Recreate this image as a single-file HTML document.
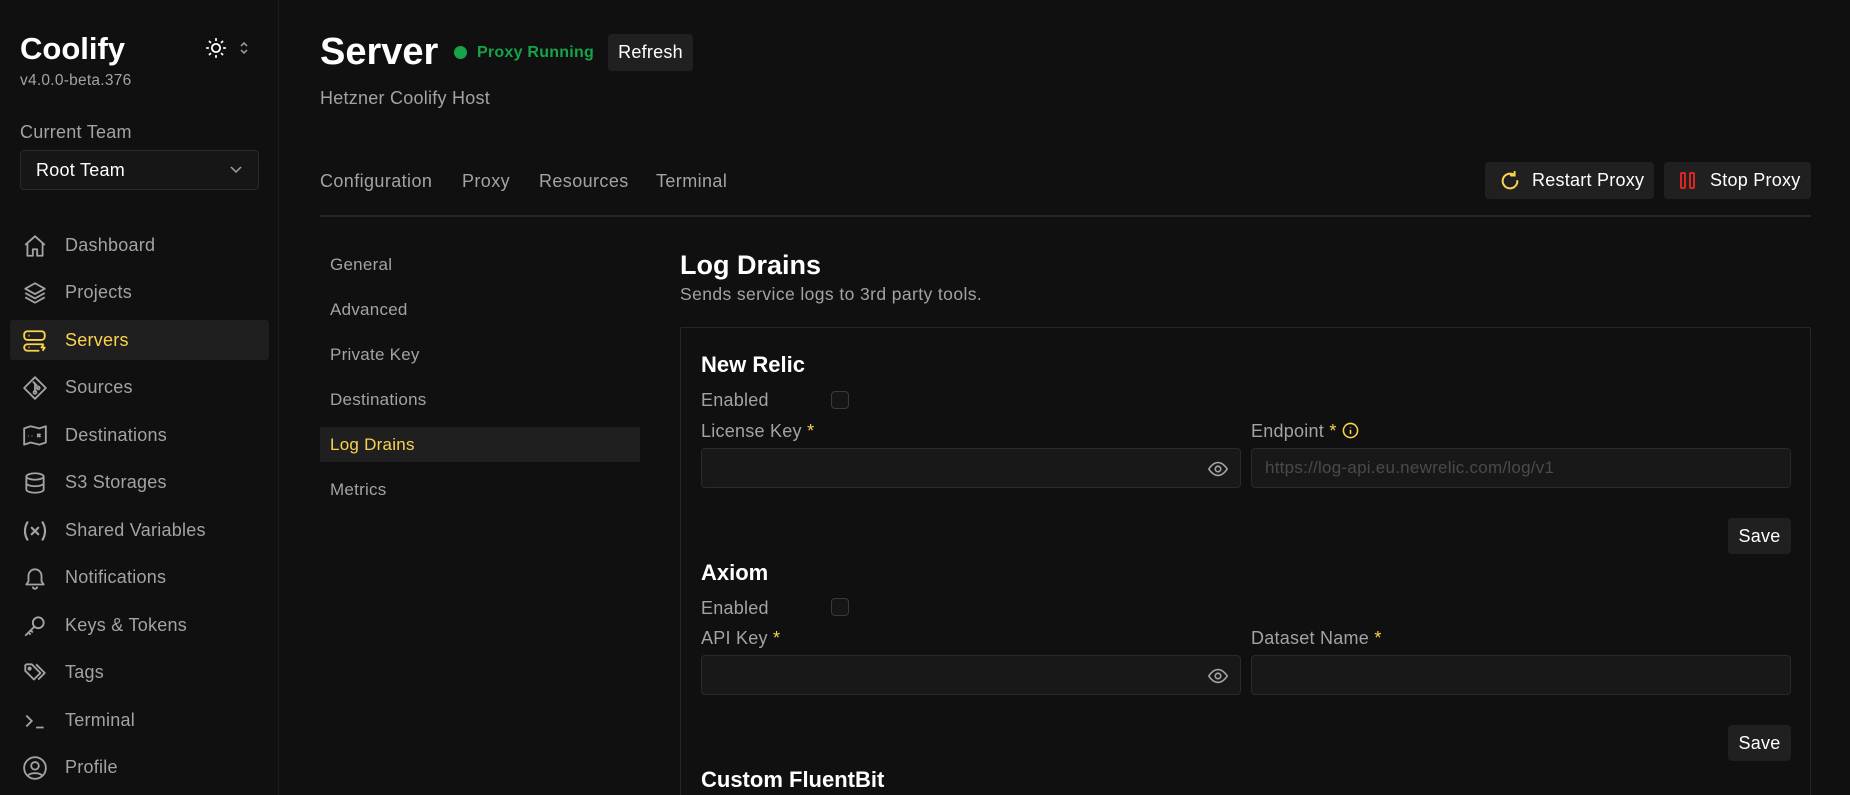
<!DOCTYPE html>
<html style="overflow:hidden;width:1850px;height:795px"><head><meta charset="utf-8"><style>
*{margin:0;padding:0;box-sizing:border-box}
body{width:1850px;height:795px;background:#101010;font-family:"Liberation Sans",sans-serif;color:#a3a3a3;position:relative;overflow:hidden;letter-spacing:0.25px}
.a{position:absolute;white-space:nowrap}
.side{position:absolute;left:0;top:0;width:279px;height:795px;border-right:1px solid #1c1c1c}
.nav{position:absolute;left:10px;width:259px;height:40px;line-height:40px;font-size:18px;color:#a3a3a3;padding-left:55px;border-radius:3px}
.nav svg{position:absolute;left:12px;top:8px}
.btn{position:absolute;background:#202020;border-radius:4px;color:#fff;font-size:18px;text-align:center}
.inp{position:absolute;background:#181818;border:1px solid #2a2a2a;border-radius:4px;height:40px}
.lbl{position:absolute;font-size:18px;color:#a3a3a3;line-height:22px}
.req{color:#fcd34d}
.cb{position:absolute;width:18px;height:18px;border:1px solid #3a3a3a;border-radius:4px;background:#161616}
.h3{position:absolute;font-size:22px;font-weight:bold;color:#fff;line-height:26px;letter-spacing:0}
.sub{position:absolute;left:330px;font-size:17px;color:#a3a3a3;line-height:22px}
</style></head><body>
<div class="side">
<div class="a" style="left:20px;top:31px;font-size:31px;font-weight:bold;color:#fff;line-height:36px;letter-spacing:0">Coolify</div>
<div class="a" style="left:20px;top:71px;font-size:15.5px;color:#a3a3a3;line-height:20px">v4.0.0-beta.376</div>
<svg class="a" style="left:205px;top:37px" width="22" height="22" viewBox="0 0 24 24" fill="none" stroke="#fff" stroke-width="2" stroke-linecap="round"><circle cx="12" cy="12" r="4.5"/><path d="M12 2v1.5M12 20.5V22M2 12h1.5M20.5 12H22M4.9 4.9l1 1M18.1 18.1l1 1M4.9 19.1l1-1M18.1 5.9l1-1"/></svg>
<svg class="a" style="left:238px;top:40px" width="12" height="16" viewBox="0 0 12 16" fill="none" stroke="#a3a3a3" stroke-width="1.5"><path d="M3 6l3-3 3 3M3 10l3 3 3-3"/></svg>
<div class="a" style="left:20px;top:121px;font-size:18px;line-height:22px">Current Team</div>
<div class="a" style="left:20px;top:150px;width:239px;height:40px;border:1px solid #2a2a2a;border-radius:4px;background:#161616;color:#fff;font-size:18px;line-height:38px;padding-left:15px">Root Team
<svg style="position:absolute;right:14px;top:12px" width="16" height="14" viewBox="0 0 16 14" fill="none" stroke="#a3a3a3" stroke-width="1.5"><path d="M3 4l5 5 5-5"/></svg></div>

<div class="nav" style="top:225px"><svg width="26" height="26" viewBox="0 0 24 24" fill="none" stroke="#a3a3a3" stroke-width="1.7" stroke-linejoin="round"><path d="M3 11l9-8 9 8M5 9.5V21h5v-6h4v6h5V9.5"/></svg>Dashboard</div>
<div class="nav" style="top:272px"><svg width="26" height="26" viewBox="0 0 24 24" fill="none" stroke="#a3a3a3" stroke-width="1.7" stroke-linejoin="round"><path d="M12 3l9 5-9 5-9-5zM3 12l9 5 9-5M3 16l9 5 9-5"/></svg>Projects</div>
<div class="nav" style="top:320px;background:#1f1f1f;color:#fcd34d"><svg width="26" height="26" viewBox="0 0 24 24" fill="none" stroke="#fcd34d" stroke-width="1.7" stroke-linejoin="round"><rect x="2" y="3" width="19" height="8" rx="3"/><path d="M16 21H5a3 3 0 0 1 0-6h15M6 7h1M6 18h1M20 15l-2 3h3l-2 3"/></svg>Servers</div>
<div class="nav" style="top:367px"><svg width="26" height="26" viewBox="0 0 24 24" fill="none" stroke="#a3a3a3" stroke-width="1.7" stroke-linejoin="round"><path d="M12 2l10 10-10 10L2 12z"/><circle cx="12" cy="16" r="1.3"/><circle cx="15" cy="12" r="1.3"/><path d="M12 8v7M10 6l2 2 2 2"/></svg>Sources</div>
<div class="nav" style="top:415px"><svg width="26" height="26" viewBox="0 0 24 24" fill="none" stroke="#a3a3a3" stroke-width="1.7" stroke-linejoin="round"><path d="M2 5l6-2 8 2 6-2v15l-6 2-8-2-6 2z"/><path d="M6 12h.5M9 12h.5M14 10l3 3M17 10l-3 3"/></svg>Destinations</div>
<div class="nav" style="top:462px"><svg width="26" height="26" viewBox="0 0 24 24" fill="none" stroke="#a3a3a3" stroke-width="1.7"><ellipse cx="12" cy="6" rx="8" ry="3"/><path d="M4 6v12c0 1.7 3.6 3 8 3s8-1.3 8-3V6M4 12c0 1.7 3.6 3 8 3s8-1.3 8-3"/></svg>S3 Storages</div>
<div class="nav" style="top:510px"><svg width="26" height="26" viewBox="0 0 24 24" fill="none" stroke="#a3a3a3" stroke-width="2" stroke-linecap="round"><path d="M5 4c-3 5-3 11 0 16M19 4c3 5 3 11 0 16M9 9l6 6M15 9l-6 6"/></svg>Shared Variables</div>
<div class="nav" style="top:557px"><svg width="26" height="26" viewBox="0 0 24 24" fill="none" stroke="#a3a3a3" stroke-width="1.7" stroke-linejoin="round"><path d="M6 10a6 6 0 0 1 12 0v5l2 3H4l2-3zM10 20a2 2 0 0 0 4 0"/></svg>Notifications</div>
<div class="nav" style="top:605px"><svg width="26" height="26" viewBox="0 0 24 24" fill="none" stroke="#a3a3a3" stroke-width="1.7" stroke-linejoin="round"><circle cx="15" cy="9" r="5"/><path d="M11.5 12.5L3 21M6 18l2 2M8 16l2 2"/></svg>Keys &amp; Tokens</div>
<div class="nav" style="top:652px"><svg width="26" height="26" viewBox="0 0 24 24" fill="none" stroke="#a3a3a3" stroke-width="1.7" stroke-linejoin="round"><path d="M3 5v5l8 8 6-6-8-8H4zM13 4l8 8-6 6"/><circle cx="7" cy="8" r="1"/></svg>Tags</div>
<div class="nav" style="top:700px"><svg width="26" height="26" viewBox="0 0 24 24" fill="none" stroke="#a3a3a3" stroke-width="1.7"><path d="M4 7l5 5-5 5M13 18h7"/></svg>Terminal</div>
<div class="nav" style="top:747px"><svg width="26" height="26" viewBox="0 0 24 24" fill="none" stroke="#a3a3a3" stroke-width="1.7"><circle cx="12" cy="12" r="10"/><circle cx="12" cy="10" r="3.5"/><path d="M5.5 19c2-3 11-3 13 0"/></svg>Profile</div>
</div>

<div class="a" style="left:320px;top:30px;font-size:38px;font-weight:bold;color:#fff;line-height:44px;letter-spacing:0">Server</div>
<div class="a" style="left:454px;top:46px;width:13px;height:13px;border-radius:50%;background:#16a34a"></div>
<div class="a" style="left:477px;top:43px;font-size:16px;font-weight:bold;color:#16a34a;line-height:20px">Proxy Running</div>
<div class="btn" style="left:608px;top:34px;width:85px;height:37px;line-height:37px">Refresh</div>
<div class="a" style="left:320px;top:87px;font-size:18px;line-height:22px">Hetzner Coolify Host</div>

<div class="a" style="left:320px;top:170px;font-size:18px;line-height:22px;letter-spacing:0.4px">Configuration</div>
<div class="a" style="left:462px;top:170px;font-size:18px;line-height:22px;letter-spacing:0.4px">Proxy</div>
<div class="a" style="left:539px;top:170px;font-size:18px;line-height:22px;letter-spacing:0.4px">Resources</div>
<div class="a" style="left:656px;top:170px;font-size:18px;line-height:22px;letter-spacing:0.4px">Terminal</div>
<div class="btn" style="left:1485px;top:162px;width:169px;height:37px;line-height:37px;text-align:left;padding-left:47px">Restart Proxy
<svg style="position:absolute;left:14px;top:8px" width="22" height="22" viewBox="0 0 24 24" fill="none" stroke="#fcd34d" stroke-width="2.2" stroke-linecap="round"><path d="M20 12a8 8 0 1 1-3-6.2M17 2v4h-4"/></svg></div>
<div class="btn" style="left:1664px;top:162px;width:147px;height:37px;line-height:37px;text-align:left;padding-left:46px">Stop Proxy
<svg style="position:absolute;left:14px;top:9px" width="20" height="20" viewBox="0 0 20 20" fill="none" stroke="#dc2626" stroke-width="2"><rect x="3" y="2" width="4" height="15" rx="1"/><rect x="12" y="2" width="4" height="15" rx="1"/></svg></div>
<div class="a" style="left:320px;top:215px;width:1491px;height:2px;background:#262626"></div>

<div class="sub" style="top:254px">General</div>
<div class="sub" style="top:299px">Advanced</div>
<div class="sub" style="top:344px">Private Key</div>
<div class="sub" style="top:389px">Destinations</div>
<div class="a" style="left:320px;top:427px;width:320px;height:35px;background:#1f1f1f"></div>
<div class="sub" style="top:434px;color:#fcd34d">Log Drains</div>
<div class="sub" style="top:479px">Metrics</div>

<div class="a" style="left:680px;top:250px;font-size:27px;font-weight:bold;color:#fff;line-height:30px;letter-spacing:0">Log Drains</div>
<div class="a" style="left:680px;top:283px;font-size:17.5px;line-height:22px;letter-spacing:0.4px">Sends service logs to 3rd party tools.</div>
<div class="a" style="left:680px;top:327px;width:1131px;height:468px;border:1px solid #262626;border-bottom:none;border-radius:2px 2px 0 0"></div>

<div class="h3" style="left:701px;top:352px">New Relic</div>
<div class="lbl" style="left:701px;top:389px">Enabled</div>
<div class="cb" style="left:831px;top:391px"></div>
<div class="lbl" style="left:701px;top:420px">License Key <span class="req">*</span></div>
<div class="lbl" style="left:1251px;top:420px">Endpoint <span class="req">*</span> <svg style="vertical-align:-2px" width="17" height="17" viewBox="0 0 24 24" fill="none" stroke="#fcd34d" stroke-width="2.2"><circle cx="12" cy="12" r="10"/><path d="M12 11v6M12 7v1"/></svg></div>
<div class="inp" style="left:701px;top:448px;width:540px"><svg style="position:absolute;right:10px;top:9px" width="24" height="22" viewBox="0 0 24 24" fill="none" stroke="#a3a3a3" stroke-width="1.8"><path d="M2 12s4-7 10-7 10 7 10 7-4 7-10 7S2 12 2 12z"/><circle cx="12" cy="12" r="3"/></svg></div>
<div class="inp" style="left:1251px;top:448px;width:540px;color:#4a4a4a;font-size:17px;line-height:38px;padding-left:13px">https://log-api.eu.newrelic.com/log/v1</div>
<div class="btn" style="left:1728px;top:518px;width:63px;height:36px;line-height:36px">Save</div>

<div class="h3" style="left:701px;top:560px">Axiom</div>
<div class="lbl" style="left:701px;top:597px">Enabled</div>
<div class="cb" style="left:831px;top:598px"></div>
<div class="lbl" style="left:701px;top:627px">API Key <span class="req">*</span></div>
<div class="lbl" style="left:1251px;top:627px">Dataset Name <span class="req">*</span></div>
<div class="inp" style="left:701px;top:655px;width:540px"><svg style="position:absolute;right:10px;top:9px" width="24" height="22" viewBox="0 0 24 24" fill="none" stroke="#a3a3a3" stroke-width="1.8"><path d="M2 12s4-7 10-7 10 7 10 7-4 7-10 7S2 12 2 12z"/><circle cx="12" cy="12" r="3"/></svg></div>
<div class="inp" style="left:1251px;top:655px;width:540px"></div>
<div class="btn" style="left:1728px;top:725px;width:63px;height:36px;line-height:36px">Save</div>

<div class="h3" style="left:701px;top:767px">Custom FluentBit</div>
</body></html>
